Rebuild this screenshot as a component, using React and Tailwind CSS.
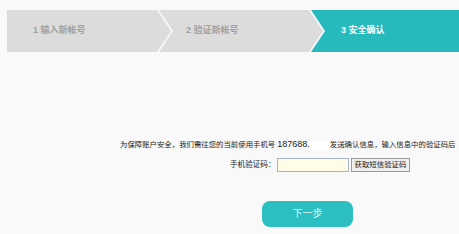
export default function App() {
  return (
    <div className="w-[459px] h-[234px] overflow-hidden bg-[#f9f9f9] font-['Liberation_Sans','Noto_Sans_CJK_SC',sans-serif]">
      {/* Steps */}
      <div className="flex h-[42px] mt-[10px] ml-[7px]">
        <div className="w-[164px] shrink-0 bg-[#dcdcdc] flex items-center pl-[26px] text-[9px] font-bold text-[#a0a0a0] [clip-path:polygon(0_0,150px_0,164px_50%,150px_100%,0_100%)]">
          1 输入新帐号
        </div>
        <div className="w-[164px] shrink-0 -ml-[12px] bg-[#dcdcdc] flex items-center pl-[27px] text-[9px] font-bold text-[#a0a0a0] [clip-path:polygon(0_0,150px_0,164px_50%,150px_100%,0_100%,14px_50%)]">
          2 验证新帐号
        </div>
        <div className="flex-1 -ml-[12px] bg-[#26babd] flex items-center pl-[30px] text-[9px] font-bold text-white [clip-path:polygon(0_0,100%_0,100%_100%,0_100%,14px_50%)]">
          3 安全确认
        </div>
      </div>

      {/* Message */}
      <div className="mt-[88px] pl-[120px] whitespace-nowrap text-[7.4px] leading-[9px] text-[#222]">
        为保障账户安全，我们需往您的当前使用手机号 <span className="text-[9px]">187688.</span>
        <span className="inline-block w-[20px] h-[9px] bg-white align-middle"></span>发送确认信息，输入信息中的验证码后
      </div>

      <div className="mt-[8px] flex items-center h-[14px] pl-[230px]">
        <span className="text-[7.6px] text-[#222] leading-none">手机验证码：</span>
        <input className="ml-[1px] w-[72px] h-[14px] bg-[#fffde8] border border-[#a7b4c8] outline-none" />
        <button className="ml-[2px] h-[14px] px-[3px] bg-[#efefef] border border-[#9a9a9a] text-[7.4px] leading-none text-[#222]">
          获取短信验证码
        </button>
      </div>

      <button className="block mt-[29px] ml-[262px] w-[91px] h-[26px] rounded-[8px] bg-[#2bbfc2] text-[10px] text-[#e4f7f7]">
        下一步
      </button>
    </div>
  );
}
